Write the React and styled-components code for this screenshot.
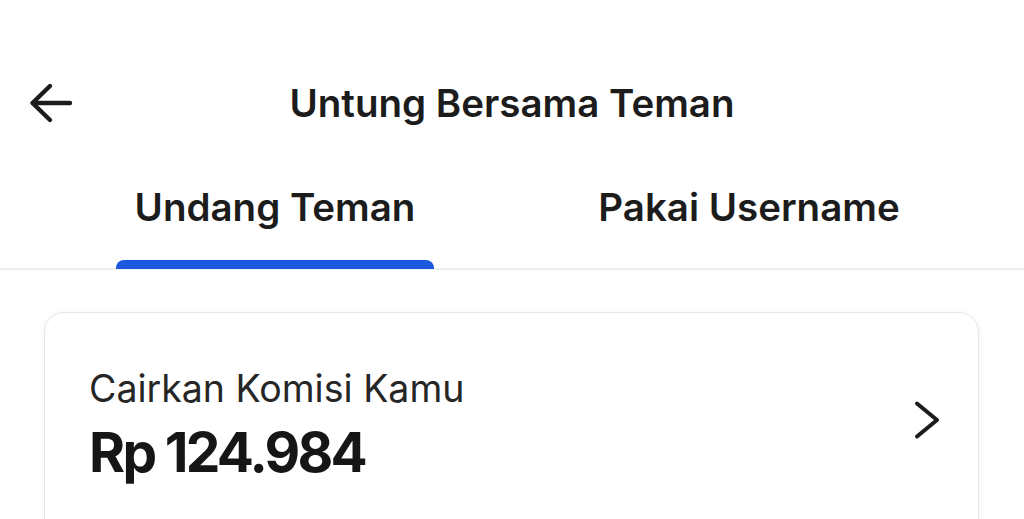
import React, { useState } from "react";
import styled, { createGlobalStyle } from "styled-components";

const Global = createGlobalStyle`
  html, body { margin: 0; padding: 0; background: #fff; }
  body { font-family: Inter, "Noto Sans", sans-serif; color: #1c1c1c; }
  * { box-sizing: border-box; }
`;

const Page = styled.div`
  width: 1024px;
  height: 519px;
  overflow: hidden;
  background: #fff;
`;

const Header = styled.div`
  display: grid;
  grid-template-columns: 100px 1fr 100px;
  align-items: center;
  padding-top: 76px;
  height: 130px;
`;

const BackButton = styled.button`
  border: none;
  background: none;
  padding: 0 0 0 28px;
  display: flex;
  align-items: center;
  color: #1c1c1c;
  cursor: pointer;
`;

const Title = styled.h1`
  margin: 0;
  text-align: center;
  font-size: 38.5px;
  font-weight: 600;
  color: #1c1c1c;
`;

const Tabs = styled.div`
  display: grid;
  grid-template-columns: 1fr 1fr;
  padding: 0 38px;
  margin-top: 46px;
  border-bottom: 2px solid #eeeeee;
`;

const Tab = styled.button`
  border: none;
  background: none;
  display: flex;
  flex-direction: column;
  align-items: center;
  padding: 0;
  font-family: inherit;
  cursor: pointer;
`;

const TabLabel = styled.span`
  position: relative;
  font-size: 38.5px;
  font-weight: 600;
  color: #1c1c1c;
  padding: 0 19px;
  height: 92px;
  line-height: 62px;
  &::after {
    content: "";
    position: absolute;
    left: 0;
    right: 0;
    bottom: -1px;
    height: 9px;
    border-radius: 8px 8px 0 0;
    background: ${(p) => (p.$active ? "#1b58e0" : "transparent")};
  }
`;

const Card = styled.div`
  margin: 42px 45px 0 44px;
  border: 1.5px solid #e6e6e6;
  border-radius: 20px;
  box-shadow: 0 1px 6px rgba(0, 0, 0, 0.06);
  padding: 53px 36px 60px 44px;
  display: flex;
  align-items: flex-start;
  justify-content: space-between;
`;

const CardText = styled.div`
  display: flex;
  flex-direction: column;
`;

const Label = styled.span`
  font-size: 37.5px;
  font-weight: 400;
  color: #262626;
  line-height: 46px;
`;

const Amount = styled.span`
  margin-top: 8px;
  font-size: 55px;
  font-weight: 700;
  letter-spacing: -2.7px;
  color: #161616;
  line-height: 64px;
`;

const ChevronWrap = styled.span`
  display: flex;
  margin-top: 34px;
`;

const Arrow = () => (
  <svg width="46" height="44" viewBox="0 0 46 44" fill="none" stroke="currentColor" strokeWidth="4.4" strokeLinecap="round" strokeLinejoin="round">
    <path d="M42 22H5" />
    <path d="M22 5L4.5 22L22 39" />
  </svg>
);

const Chevron = () => (
  <svg width="30" height="40" viewBox="0 0 30 40" fill="none" stroke="#1c1c1c" strokeWidth="4" strokeLinecap="round" strokeLinejoin="round">
    <path d="M5 3.5L25 20L5 36.5" />
  </svg>
);

export default function App() {
  const [tab, setTab] = useState(0);
  return (
    <Page>
      <Global />
      <Header>
        <BackButton aria-label="Kembali"><Arrow /></BackButton>
        <Title>Untung Bersama Teman</Title>
        <div />
      </Header>
      <Tabs>
        {["Undang Teman", "Pakai Username"].map((t, i) => (
          <Tab key={t} onClick={() => setTab(i)}>
            <TabLabel $active={tab === i}>{t}</TabLabel>
          </Tab>
        ))}
      </Tabs>
      <Card>
        <CardText>
          <Label>Cairkan Komisi Kamu</Label>
          <Amount>Rp 124.984</Amount>
        </CardText>
        <ChevronWrap><Chevron /></ChevronWrap>
      </Card>
    </Page>
  );
}
